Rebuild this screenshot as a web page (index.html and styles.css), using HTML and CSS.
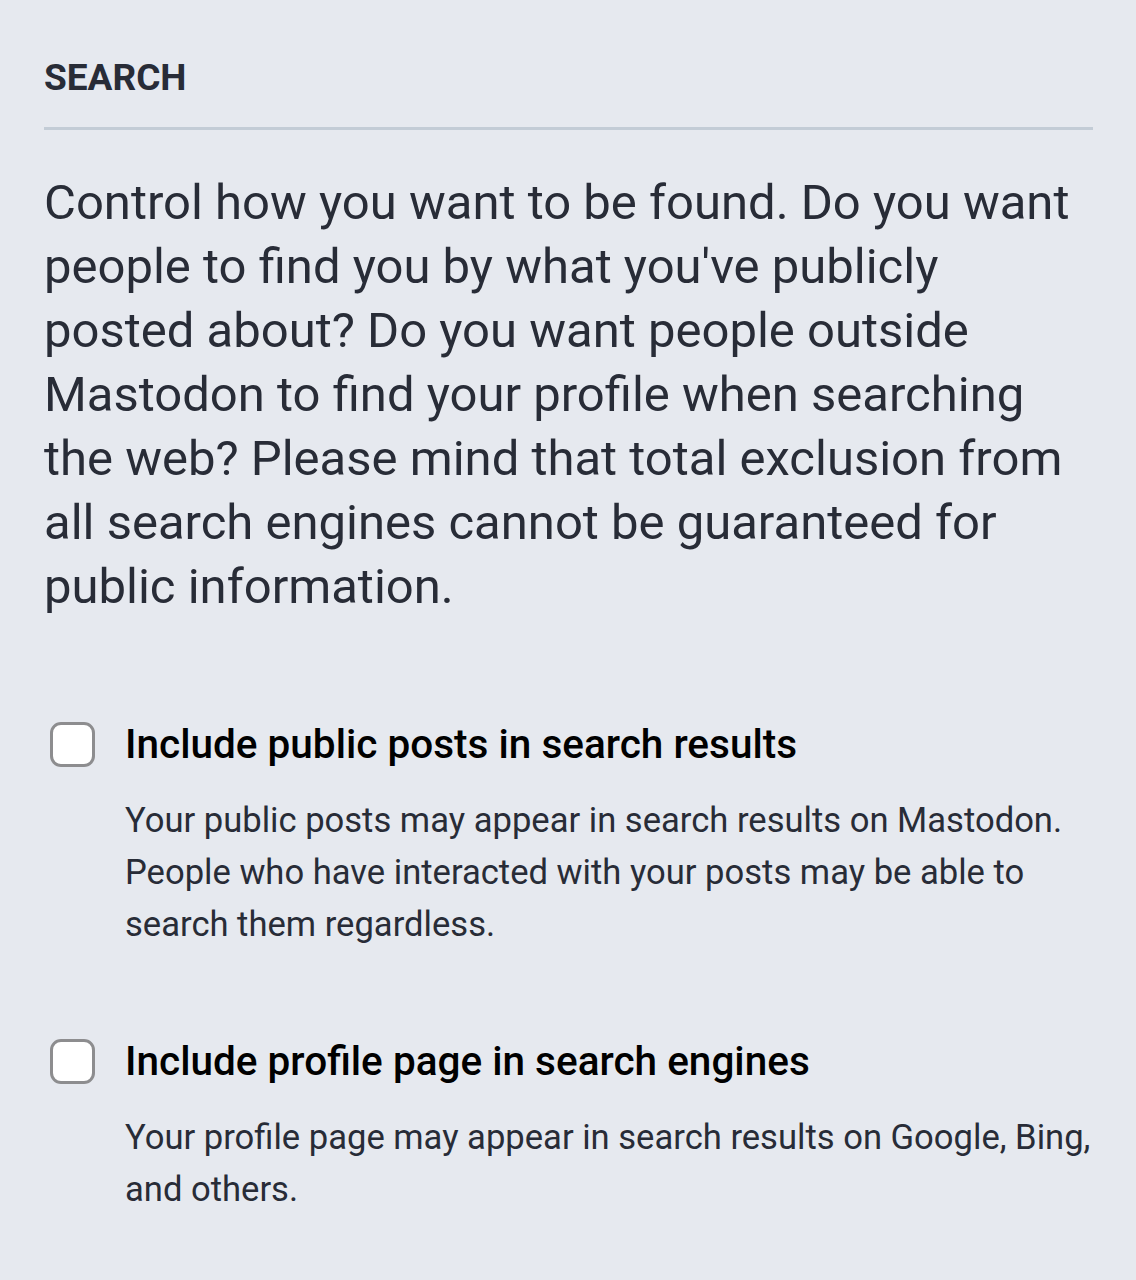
FILE: index.html
```html
<!DOCTYPE html>
<html lang="en">
<head>
<meta charset="utf-8">
<title>Search settings</title>
<link rel="stylesheet" href="styles.css">
</head>
<body>
<main class="page">
  <h2 class="section-title">SEARCH</h2>
  <p class="intro">Control how you want to be found. Do you want people to find you by what you've publicly posted about? Do you want people outside Mastodon to find your profile when searching the web? Please mind that total exclusion from all search engines cannot be guaranteed for public information.</p>
  <div class="option">
    <label class="option-row">
      <span class="checkbox"></span>
      <span class="option-label">Include public posts in search results</span>
    </label>
    <p class="hint">Your public posts may appear in search results on Mastodon. People who have interacted with your posts may be able to search them regardless.</p>
  </div>
  <div class="option">
    <label class="option-row">
      <span class="checkbox"></span>
      <span class="option-label">Include profile page in search engines</span>
    </label>
    <p class="hint">Your profile page may appear in search results on Google, Bing, and others.</p>
  </div>
</main>
</body>
</html>
```
FILE: styles.css
```css
html, body {
  margin: 0;
  padding: 0;
  background: #e6e9ef;
}
body {
  font-family: Roboto, "Noto Sans", sans-serif;
  color: #282c37;
}
.page {
  padding: 56px 40px 40px 44px;
}
.section-title {
  margin: 0 3px 0 0;
  font-size: 37px;
  line-height: 44px;
  font-weight: 700;
  color: #282c37;
  padding-bottom: 27px;
  border-bottom: 3px solid #c3ccd6;
}
.intro {
  margin: 41px 0 0 0;
  font-size: 49px;
  line-height: 64px;
  font-weight: 400;
  color: #282c37;
}
.option {
  margin-top: 101px;
}
.option + .option {
  margin-top: 87px;
}
.option-row {
  display: flex;
  align-items: center;
  gap: 30px;
  padding-left: 6px;
}
.checkbox {
  box-sizing: border-box;
  width: 45px;
  height: 45px;
  border: 3.5px solid #8d8d8f;
  border-radius: 11px;
  background: #ffffff;
  flex: none;
}
.option-label {
  font-size: 40.5px;
  line-height: 48px;
  font-weight: 500;
  color: #000000;
}
.hint {
  margin: 26px 0 0 81px;
  font-size: 34.6px;
  line-height: 52px;
  color: #282c37;
}
```
